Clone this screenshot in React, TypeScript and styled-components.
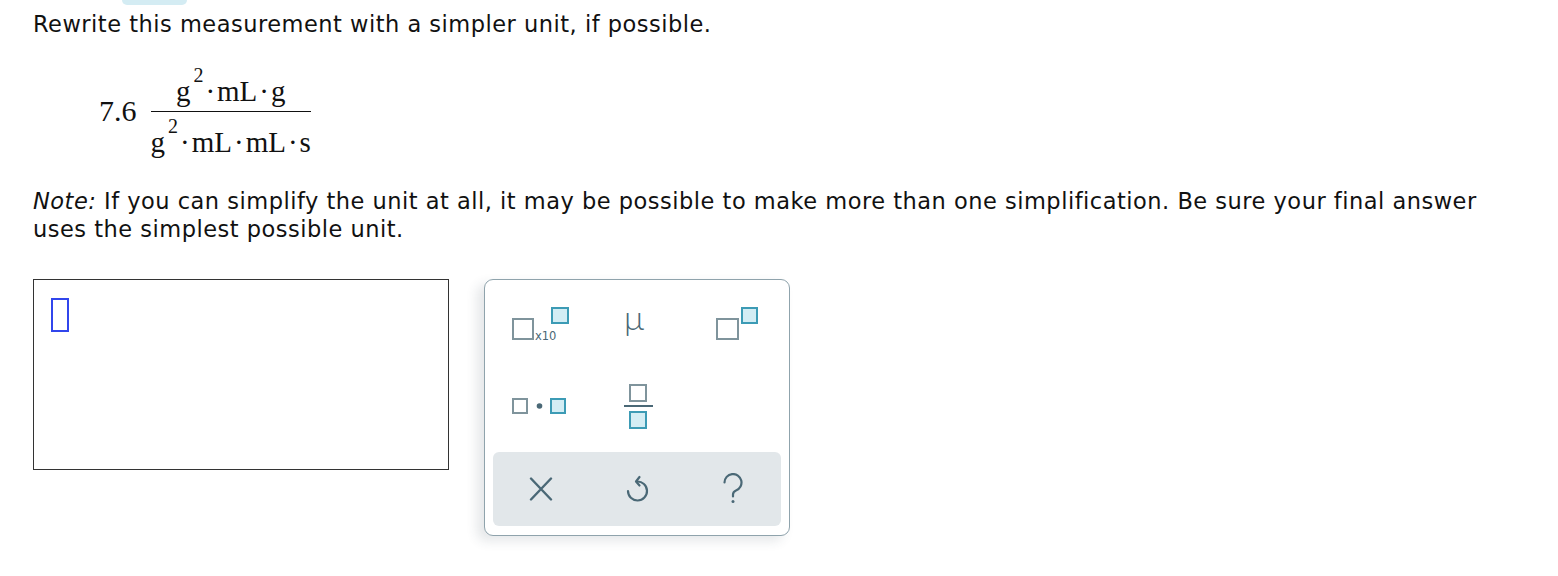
import React from "react";
import styled, { createGlobalStyle } from "styled-components";

const GlobalStyle = createGlobalStyle`
  html, body {
    margin: 0;
    padding: 0;
    background: #ffffff;
  }
  body {
    font-family: "DejaVu Sans", Verdana, sans-serif;
    color: #111111;
  }
`;

const grayStroke = "#7f949c";
const blueStroke = "#3c9bb5";
const blueFill = "#d3edf4";
const iconColor = "#4a6876";

const Page = styled.div`
  width: 1558px;
  height: 576px;
  overflow: hidden;
  position: relative;
`;

const TopTab = styled.div`
  margin-left: 122px;
  width: 65px;
  height: 5px;
  background: #d4ecf3;
  border-radius: 0 0 9px 9px;
`;

const Content = styled.div`
  padding-left: 33px;
`;

const Heading = styled.div`
  margin-top: 5px;
  font-size: 22.5px;
  letter-spacing: 0.5px;
  line-height: 28px;
`;

const MathBlock = styled.div`
  display: flex;
  align-items: center;
  margin-left: 66px;
  margin-top: 19px;
  font-family: "Liberation Serif", "Times New Roman", serif;
  font-size: 29px;
  color: #111111;
`;

const Coefficient = styled.span`
  font-size: 30px;
  margin-right: 10px;
  margin-top: 9px;
  line-height: 1;
`;

const Fraction = styled.div`
  display: flex;
  flex-direction: column;
  align-items: center;
  padding: 0 4px;
`;

const Numerator = styled.div`
  line-height: 28px;
  padding-top: 18px;
  padding-bottom: 6px;
  white-space: nowrap;
`;

const Denominator = styled.div`
  line-height: 28px;
  padding-top: 14px;
  white-space: nowrap;
`;

const Bar = styled.div`
  align-self: stretch;
  height: 0;
  border-top: 1.5px solid #111111;
`;

const Exp = styled.span`
  font-size: 20px;
  line-height: 0;
  vertical-align: 19px;
  margin-left: 3px;
`;

const Dot = styled.span`
  margin: 0 2px;
`;

const Note = styled.div`
  margin-top: 31px;
  font-size: 22.5px;
  letter-spacing: 0.5px;
  line-height: 28px;
  width: 1478px;
`;

const AnswerRow = styled.div`
  display: flex;
  align-items: flex-start;
  margin-top: 36px;
`;

const AnswerBox = styled.div`
  box-sizing: border-box;
  width: 416px;
  height: 191px;
  border: 1.5px solid #333333;
  padding: 18px 0 0 17px;
`;

const Cursor = styled.div`
  box-sizing: border-box;
  width: 18px;
  height: 34px;
  border: 2px solid #3146ec;
  background: #ffffff;
`;

const Keypad = styled.div`
  box-sizing: border-box;
  margin-left: 35px;
  width: 306px;
  height: 257px;
  border: 1px solid #8fa3ac;
  border-radius: 9px;
  padding: 2px 8px 0 8px;
  background: #ffffff;
  box-shadow: -7px 5px 12px rgba(40, 60, 70, 0.12);
  display: flex;
  flex-direction: column;
`;

const KeyGrid = styled.div`
  display: grid;
  grid-template-columns: repeat(3, 96px);
  grid-auto-rows: 82px;
`;

const Key = styled.div`
  display: flex;
  align-items: center;
  justify-content: center;
`;

const Mu = styled.span`
  font-family: "Lato", "DejaVu Sans", sans-serif;
  font-weight: 300;
  font-size: 34px;
  line-height: 1;
  color: ${iconColor};
  margin-left: -6px;
  margin-top: -12px;
`;

const ActionBar = styled.div`
  margin-top: 6px;
  height: 74px;
  border-radius: 6px;
  background: #e2e7ea;
  display: grid;
  grid-template-columns: repeat(3, 1fr);
`;

const Action = styled.div`
  display: flex;
  align-items: center;
  justify-content: center;
`;

const TimesTenIcon = () => (
  <svg width="60" height="40" viewBox="0 0 60 40" style={{ marginTop: 4 }}>
    <rect x="2" y="14" width="20" height="20" fill="#fff" stroke={grayStroke} strokeWidth="2" />
    <text x="24" y="35" fontSize="11.5" fill={iconColor} fontFamily="DejaVu Sans, sans-serif">
      x10
    </text>
    <rect x="41" y="3" width="16" height="15" fill={blueFill} stroke={blueStroke} strokeWidth="2" />
  </svg>
);

const PowerIcon = () => (
  <svg width="52" height="36" viewBox="0 0 52 36">
    <rect x="10" y="14" width="21" height="20" fill="#fff" stroke={grayStroke} strokeWidth="2" />
    <rect x="35" y="3" width="15" height="15" fill={blueFill} stroke={blueStroke} strokeWidth="2" />
  </svg>
);

const ProductIcon = () => (
  <svg width="60" height="36" viewBox="0 0 60 36">
    <rect x="2" y="12" width="14" height="14" fill="#fff" stroke={grayStroke} strokeWidth="2" />
    <circle cx="28.5" cy="19" r="2.8" fill={iconColor} />
    <rect x="40" y="12" width="14" height="14" fill={blueFill} stroke={blueStroke} strokeWidth="2" />
  </svg>
);

const FractionIcon = () => (
  <svg width="32" height="50" viewBox="0 0 32 50">
    <rect x="9" y="5" width="16" height="16" fill="#fff" stroke={grayStroke} strokeWidth="2" />
    <line x1="3" y1="26" x2="32" y2="26" stroke={iconColor} strokeWidth="2" />
    <rect x="9" y="32" width="16" height="16" fill={blueFill} stroke={blueStroke} strokeWidth="2" />
  </svg>
);

const ClearIcon = () => (
  <svg width="24" height="24" viewBox="0 0 24 24">
    <path d="M2 1.5 L22 22.5 M22 1.5 L2 22.5" stroke={iconColor} strokeWidth="2.4" strokeLinecap="round" fill="none" />
  </svg>
);

const UndoIcon = () => (
  <svg width="26" height="30" viewBox="0 0 26 30">
    <path
      d="M4 17 A9.5 9.5 0 1 0 13 7.5"
      stroke={iconColor}
      strokeWidth="2.2"
      strokeLinecap="round"
      fill="none"
    />
    <path d="M15.5 3 L12 7.5 L15.5 11.5" stroke={iconColor} strokeWidth="2.2" strokeLinecap="round" strokeLinejoin="round" fill="none" />
  </svg>
);

const HelpIcon = () => (
  <svg width="22" height="32" viewBox="0 0 22 32">
    <path
      d="M2.5 9.5 A8.5 8.5 0 1 1 14 17.5 C11.8 18.5 11 19.6 11 21.5 V23.5"
      stroke={iconColor}
      strokeWidth="2.2"
      strokeLinecap="round"
      fill="none"
    />
    <circle cx="11" cy="28.5" r="1.5" fill={iconColor} />
  </svg>
);

export default function App() {
  return (
    <Page>
      <GlobalStyle />
      <TopTab />
      <Content>
        <Heading>Rewrite this measurement with a simpler unit, if possible.</Heading>
        <MathBlock>
          <Coefficient>7.6</Coefficient>
          <Fraction>
            <Numerator>
              g<Exp>2</Exp>
              <Dot>·</Dot>mL<Dot>·</Dot>g
            </Numerator>
            <Bar />
            <Denominator>
              g<Exp>2</Exp>
              <Dot>·</Dot>mL<Dot>·</Dot>mL<Dot>·</Dot>s
            </Denominator>
          </Fraction>
        </MathBlock>
        <Note>
          <em>Note:</em> If you can simplify the unit at all, it may be possible to make more than one
          simplification. Be sure your final answer uses the simplest possible unit.
        </Note>
        <AnswerRow>
          <AnswerBox>
            <Cursor />
          </AnswerBox>
          <Keypad>
            <KeyGrid>
              <Key>
                <TimesTenIcon />
              </Key>
              <Key>
                <Mu>μ</Mu>
              </Key>
              <Key>
                <PowerIcon />
              </Key>
              <Key>
                <ProductIcon />
              </Key>
              <Key>
                <FractionIcon />
              </Key>
              <Key />
            </KeyGrid>
            <ActionBar>
              <Action>
                <ClearIcon />
              </Action>
              <Action>
                <UndoIcon />
              </Action>
              <Action>
                <HelpIcon />
              </Action>
            </ActionBar>
          </Keypad>
        </AnswerRow>
      </Content>
    </Page>
  );
}
